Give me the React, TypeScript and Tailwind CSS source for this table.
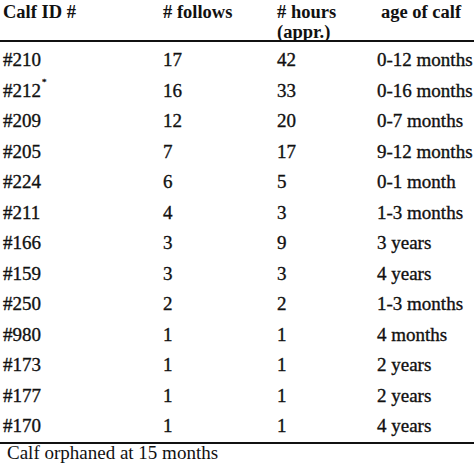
const rows = [
  ["#210", "17", "42", "0-12 months"],
  ["#212", "16", "33", "0-16 months"],
  ["#209", "12", "20", "0-7 months"],
  ["#205", "7", "17", "9-12 months"],
  ["#224", "6", "5", "0-1 month"],
  ["#211", "4", "3", "1-3 months"],
  ["#166", "3", "9", "3 years"],
  ["#159", "3", "3", "4 years"],
  ["#250", "2", "2", "1-3 months"],
  ["#980", "1", "1", "4 months"],
  ["#173", "1", "1", "2 years"],
  ["#177", "1", "1", "2 years"],
  ["#170", "1", "1", "4 years"],
];

export default function App() {
  return (
    <div className="w-[474px] h-[463px] overflow-hidden bg-white text-[#111] [font-family:'Liberation_Serif',serif] text-[19px] leading-[20px]">
      {/* header */}
      <div className="grid grid-cols-[160px_114px_100px_1fr] pl-[3px] pt-[2px] h-[42px] font-bold text-[18.5px] border-b-2 border-[#111]">
        <div>Calf ID #</div>
        <div># follows</div>
        <div>
          # hours
          <br />
          (appr.)
        </div>
        <div className="pl-[4px] whitespace-nowrap">age of calf</div>
      </div>

      <div className="pt-[3px] border-b-2 border-[#111] [-webkit-text-stroke:0.35px_#111]">
        {rows.map((r, i) => (
          <div
            key={r[0]}
            className="grid grid-cols-[160px_114px_100px_1fr] pl-[3px] h-[30.5px] items-center"
          >
            <div className="relative">
              {r[0]}
              {i === 1 && (
                <span className="absolute left-[39px] -top-[3px] text-[9px] leading-none">*</span>
              )}
            </div>
            <div>{r[1]}</div>
            <div>{r[2]}</div>
            <div className="whitespace-nowrap">{r[3]}</div>
          </div>
        ))}
      </div>

      <div className="pl-[7px] whitespace-nowrap leading-[18px]">Calf orphaned at 15 months</div>
    </div>
  );
}
